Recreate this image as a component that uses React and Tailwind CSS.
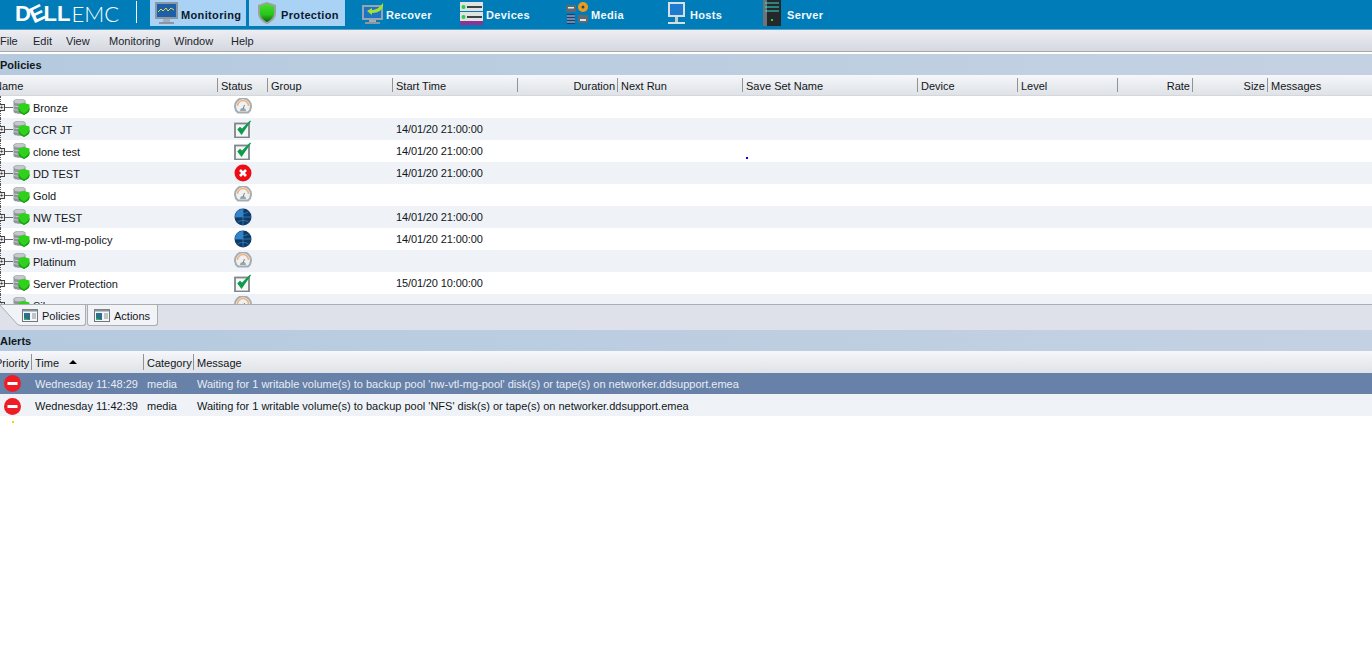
import React from 'react';

const policyColumns = [
  { label: 'Name', width: 'w-[217px]', className: '-indent-[10px]' },
  { label: 'Status', width: 'w-[50px]' },
  { label: 'Group', width: 'w-[125px]' },
  { label: 'Start Time', width: 'w-[125px]' },
  { label: 'Duration', width: 'w-[100px]', right: true },
  { label: 'Next Run', width: 'w-[125px]' },
  { label: 'Save Set Name', width: 'w-[175px]' },
  { label: 'Device', width: 'w-[100px]' },
  { label: 'Level', width: 'w-[100px]' },
  { label: 'Rate', width: 'w-[75px]', right: true },
  { label: 'Size', width: 'w-[75px]', right: true },
  { label: 'Messages', width: 'flex-1' },
];

const policies = [
  { name: 'Bronze', status: 'gauge' },
  { name: 'CCR JT', status: 'check', start: '14/01/20 21:00:00' },
  { name: 'clone test', status: 'check', start: '14/01/20 21:00:00' },
  { name: 'DD TEST', status: 'error', start: '14/01/20 21:00:00' },
  { name: 'Gold', status: 'gauge' },
  { name: 'NW TEST', status: 'globe', start: '14/01/20 21:00:00' },
  { name: 'nw-vtl-mg-policy', status: 'globe', start: '14/01/20 21:00:00' },
  { name: 'Platinum', status: 'gauge' },
  { name: 'Server Protection', status: 'check', start: '15/01/20 10:00:00' },
  { name: 'Silver', status: 'gauge' },
];

const alerts = [
  {
    time: 'Wednesday 11:48:29',
    message: "Waiting for 1 writable volume(s) to backup pool 'nw-vtl-mg-pool' disk(s) or tape(s) on networker.ddsupport.emea",
    selected: true,
  },
  {
    time: 'Wednesday 11:42:39',
    message: "Waiting for 1 writable volume(s) to backup pool 'NFS' disk(s) or tape(s) on networker.ddsupport.emea",
  },
];

function MonitorIcon() {
  return (
    <svg width="26" height="26" viewBox="0 0 26 26">
      <rect x="1" y="2" width="23" height="17" fill="#8b97a3" />
      <rect x="3" y="4" width="19" height="13" fill="#1d5fa8" />
      <path d="M4 12l3-3 2 2 3-3 2 3 3-3 3 2" fill="none" stroke="#e8d83a" strokeWidth="1" />
      <rect x="9" y="19" width="7" height="3" fill="#a4adb5" />
      <rect x="5" y="22" width="15" height="2" fill="#8b97a3" />
    </svg>
  );
}

function ShieldIcon() {
  return (
    <svg width="20" height="24" viewBox="0 0 20 24">
      <defs>
        <linearGradient id="shieldFill" x1="0" y1="0" x2="0" y2="1">
          <stop offset="0" stopColor="#45e02c" />
          <stop offset="0.6" stopColor="#26c41a" />
          <stop offset="1" stopColor="#0f5f10" />
        </linearGradient>
      </defs>
      <path d="M10 1l9 3v8c0 5-4 9-9 11-5-2-9-6-9-11V4z" fill="#9aa39a" />
      <path d="M10 3l7 2.500v6.500c0 4-3 7-7 9-4-2-7-5-7-9V5.500z" fill="url(#shieldFill)" />
    </svg>
  );
}

function RecoverIcon() {
  return (
    <svg width="28" height="26" viewBox="0 0 28 26">
      <rect x="1" y="5" width="21" height="15" fill="#97a3ad" />
      <rect x="3" y="7" width="17" height="11" fill="#1c74c9" />
      <path d="M6 11l5-3v2c4 0 7-2 11-7 1 5-3 10-11 10v2z" fill="#a5e02c" />
      <rect x="8" y="20" width="7" height="2" fill="#a4adb5" />
      <rect x="4" y="22" width="15" height="2" fill="#8b97a3" />
    </svg>
  );
}

function DevicesIcon() {
  return (
    <svg width="24" height="24" viewBox="0 0 24 24">
      <rect y="1" width="23" height="9" fill="#dfe4e2" />
      <rect y="11" width="23" height="9" fill="#dfe4e2" />
      <rect y="20" width="23" height="4" fill="#8e3393" />
      <rect x="7" y="5" width="15" height="2" fill="#3c4448" />
      <rect x="7" y="15" width="15" height="2" fill="#3c4448" />
      <circle cx="3.500" cy="6" r="2" fill="#25d33a" />
      <circle cx="3.500" cy="16" r="2" fill="#25d33a" />
    </svg>
  );
}

function MediaIcon() {
  return (
    <svg width="24" height="24" viewBox="0 0 24 24">
      <rect x="1" y="4" width="10" height="7" fill="#5d6a74" />
      <rect x="3" y="6" width="6" height="1.500" fill="#e5e8ea" />
      <circle cx="18" cy="6" r="5" fill="#f09a1a" />
      <circle cx="18" cy="6" r="1.500" fill="#18506f" />
      <rect x="2" y="13" width="8" height="10" fill="#1f3f72" />
      <path d="M2 15h8M2 18h8M2 21h8" stroke="#c4d0de" strokeWidth="1" />
      <rect x="13" y="14" width="10" height="8" fill="#5d6a74" />
      <rect x="15" y="18" width="6" height="2" fill="#dfe4e2" />
    </svg>
  );
}

function HostsIcon() {
  return (
    <svg width="20" height="26" viewBox="0 0 20 26">
      <rect x="1" y="2" width="17" height="15" fill="#d8dee3" />
      <rect x="3" y="4" width="13" height="11" fill="#1d7bd0" />
      <rect x="8" y="17" width="3" height="5" fill="#c3ccd3" />
      <rect x="1" y="22" width="17" height="2" fill="#d8dee3" />
    </svg>
  );
}

function ServerIcon() {
  return (
    <svg width="18" height="26" viewBox="0 0 18 26">
      <rect width="18" height="26" fill="#24282b" />
      <rect width="4" height="26" fill="#6d7478" />
      <path d="M2 3h14M2 7h14M2 11h14" stroke="#35e0d8" strokeWidth="1.200" />
      <rect x="8" y="19" width="2" height="2" fill="#25d33a" />
    </svg>
  );
}

function NavItem({ icon, label, active, className }) {
  return (
    <div className={`flex h-[26px] items-center font-bold text-[11px] ${active ? 'bg-[#a9d2f5] text-[#0b1a2c]' : 'text-[#f2f8fc]'} ${className}`}>
      {icon}
      <span className="tracking-[0.35px] mt-[4px]">{label}</span>
    </div>
  );
}

function Logo() {
  return (
    <div className="flex items-center w-[136px] pl-[15px] text-white h-[28px]">
      <span className="font-['Liberation_Sans',sans-serif] font-bold text-[22px] leading-none flex items-center">
        D<span className="inline-block -rotate-[25deg] mx-[-1px]">E</span>LL
      </span>
      <span className="font-['Lato',sans-serif] font-light text-[22px] leading-none ml-[1px]">EMC</span>
    </div>
  );
}

function StatusIcon({ type }) {
  if (type === 'check') {
    return (
      <svg width="18" height="18" viewBox="0 0 18 18">
        <rect x="1" y="3.500" width="14" height="14" fill="#f5f6f5" stroke="#7f8689" strokeWidth="1.800" />
        <path d="M4 9.500l3.500 4.500L16.500 1 8 9.500l-2-2z" fill="#0d9a4c" stroke="#0d9a4c" strokeWidth="1.200" />
      </svg>
    );
  }
  if (type === 'error') {
    return (
      <svg width="18" height="18" viewBox="0 0 18 18">
        <circle cx="9" cy="9" r="8.500" fill="#ee0d17" />
        <path d="M6 6l6 6M12 6l-6 6" stroke="#fff" strokeWidth="2.600" />
      </svg>
    );
  }
  if (type === 'globe') {
    return (
      <svg width="18" height="18" viewBox="0 0 18 18">
        <circle cx="9" cy="9" r="8.500" fill="#0d3c68" />
        <path d="M9 1a8 8 0 0 0-8 8h8z" fill="#2f86cf" />
        <path d="M9 1v16M1 9h16M3.500 4c3 2 8 2 11 0M3.500 14c3-2 8-2 11 0" fill="none" stroke="#3f7fb8" strokeWidth="0.800" />
      </svg>
    );
  }
  return (
    <svg width="18" height="16" viewBox="0 0 18 16" className="-mt-[2px]">
      <path d="M4 14.500a8 8 0 1 1 10 0z" fill="#eef0f1" stroke="#a3adb3" strokeWidth="2" />
      <path d="M3.500 8a5.500 5.500 0 0 1 11 0" fill="none" stroke="#efb27c" strokeWidth="1.500" />
      <path d="M6 13a3 3 0 0 1 6 0z" fill="#9aa5ab" />
      <path d="M9 11l1.500-4" stroke="#7b868c" strokeWidth="1" />
    </svg>
  );
}

function PolicyIcon() {
  return (
    <svg width="17" height="16" viewBox="0 0 17 16" className="shrink-0">
      <ellipse cx="6.500" cy="2.500" rx="6" ry="2.300" fill="#c5c9cc" stroke="#858b8f" strokeWidth="0.600" />
      <path d="M0.500 2.500v10c0 1.300 2.700 2.300 6 2.300s6-1 6-2.300v-10c0 1.300-2.700 2.300-6 2.300s-6-1-6-2.300z" fill="#8e9498" />
      <path d="M0.500 6.500c1 1.500 11 1.500 12 0M0.500 10c1 1.500 11 1.500 12 0" fill="none" stroke="#d7dadc" strokeWidth="0.800" />
      <path d="M11 4l5.500 1.500v5c0 2.500-2.500 4-5.500 5.500-3-1.500-5.500-3-5.500-5.500v-5z" fill="#2fd11c" />
      <path d="M11 16c3-1.500 5.500-3 5.500-5.500v-2c-1 3-3 5-5.500 6-2.500-1-4.500-3-5.500-6v2c0 2.500 2.500 4 5.500 5.500z" fill="#1f9a18" />
    </svg>
  );
}

function TreeHandle() {
  return (
    <div className="relative w-[13px] h-full shrink-0">
      <div className="absolute left-0 top-0 bottom-0 border-l border-dotted border-l-[#555]" />
      <div className="absolute left-0 top-[11px] w-[13px] border-t border-t-[#666]" />
      <div className="absolute left-[-2px] top-[8px] w-[7px] h-[7px] bg-[#eeeeee] border border-[#444] flex items-center justify-center text-[7px] leading-none text-black">
        +
      </div>
    </div>
  );
}

function SectionTitle({ children }) {
  return (
    <div className="h-[21px] shrink-0 flex items-center bg-gradient-to-r from-[#b5cadf] to-[#c4d1e3] text-[11px] font-bold text-[#101820]">
      <span className="mt-[2px]">{children}</span>
    </div>
  );
}

function HeaderCell({ label, width, right, className = '', first }) {
  return (
    <div className={`${width} h-full flex items-center shrink-0 relative ${right ? 'justify-end pr-[2px]' : 'pl-[4px]'} ${className}`}>
      {!first && <div className="absolute left-0 top-[3px] bottom-[3px] border-l border-l-[#8e9398]" />}
      <span className="whitespace-nowrap mt-[3px]">{label}</span>
    </div>
  );
}

function TabIcon() {
  return (
    <svg width="16" height="13" viewBox="0 0 16 13">
      <rect x="0.500" y="0.500" width="15" height="12" fill="#f5f6f7" stroke="#6f767b" />
      <rect x="0.500" y="0.500" width="15" height="2" fill="#8a9197" />
      <rect x="2" y="4" width="6" height="7" fill="#2a6f8e" />
      <path d="M2 9l6 2H2z" fill="#3cb04c" />
      <path d="M10 5h4M10 7h4M10 9h4" stroke="#8a9197" strokeWidth="1" />
    </svg>
  );
}

function PriorityIcon() {
  return (
    <svg width="17" height="17" viewBox="0 0 17 17">
      <circle cx="8.500" cy="8.500" r="8.500" fill="#ee1c25" />
      <rect x="3.500" y="7" width="10" height="3" fill="#fff" />
    </svg>
  );
}

export default function App() {
  return (
    <div className="relative w-[1372px] h-[648px] overflow-hidden bg-white text-[11px] text-[#12161a] font-['Liberation_Sans',Arial,sans-serif] flex flex-col">
      {/* top nav */}
      <div className="h-[30px] shrink-0 bg-[#007db8] border-b border-b-[#5f9fc4] flex items-start">
        <Logo />
        <div className="w-px h-[22px] bg-white mt-[1px] mr-[13px]" />
        <NavItem active icon={<span className="ml-[4px] mr-[1px]"><MonitorIcon /></span>} label="Monitoring" className="w-[96px]" />
        <div className="w-[3px]" />
        <NavItem active icon={<span className="ml-[8px] mr-[4px]"><ShieldIcon /></span>} label="Protection" className="w-[96px]" />
        <NavItem icon={<span className="ml-[16px] mr-[-3px]"><RecoverIcon /></span>} label="Recover" className="w-[115px]" />
        <NavItem icon={<span className="mr-[2px]"><DevicesIcon /></span>} label="Devices" className="w-[105px]" />
        <NavItem icon={<span className="mr-[2px]"><MediaIcon /></span>} label="Media" className="w-[102px]" />
        <NavItem icon={<span className="mr-[3px]"><HostsIcon /></span>} label="Hosts" className="w-[96px]" />
        <NavItem icon={<span className="mr-[6px]"><ServerIcon /></span>} label="Server" />
      </div>

      {/* menu bar */}
      <div className="h-[22px] shrink-0 bg-gradient-to-b from-[#eceef4] to-[#d6d8df] flex items-center text-[#20252a] border-b border-b-[#a8a9ab]">
        <span className="w-[33px] mt-[2px]">File</span>
        <span className="w-[33px] mt-[2px]">Edit</span>
        <span className="w-[43px] mt-[2px]">View</span>
        <span className="w-[65px] mt-[2px]">Monitoring</span>
        <span className="w-[57px] mt-[2px]">Window</span>
        <span className="mt-[2px]">Help</span>
      </div>
      <div className="h-[2px] shrink-0 bg-white" />

      {/* policies */}
      <SectionTitle>Policies</SectionTitle>
      <div className="h-[21px] shrink-0 flex bg-gradient-to-b from-[#f5f7fa] to-[#dfe2e6] border-b border-b-[#d5d7da]">
        {policyColumns.map((col, i) => (
          <HeaderCell key={col.label} first={i === 0} {...col} />
        ))}
      </div>
      <div className="h-[208px] shrink-0 overflow-hidden">
        {policies.map((row, i) => (
          <div key={row.name} className={`h-[22px] flex items-center ${i % 2 === 1 ? 'bg-[#eff3f7]' : 'bg-white'}`}>
            <TreeHandle />
            <PolicyIcon />
            <span className="w-[187px] shrink-0 pl-[3px] mt-[2px]">{row.name}</span>
            <div className="w-[50px] shrink-0 flex justify-center pl-[2px] -mt-[1px]">
              <StatusIcon type={row.status} />
            </div>
            <div className="w-[125px] shrink-0" />
            <span className="pl-[4px] tracking-[-0.12px]">{row.start}</span>
          </div>
        ))}
      </div>

      {/* tabs */}
      <div className="h-[26px] shrink-0 bg-[#dfe1ea] border-t border-t-[#a9aeb0] flex items-start">
        <svg width="20" height="21" viewBox="0 0 20 21" className="shrink-0">
          <path d="M0 0L18 20H20V0z" fill="#f2f3f7" />
          <path d="M0 0L18 20H20" fill="none" stroke="#a9aeb0" />
        </svg>
        <div className="w-[66px] h-[21px] bg-[#f2f3f7] border-b border-r border-[#a9aeb0] rounded-br-[3px] flex items-center gap-[4px] pl-[2px]">
          <TabIcon />
          <span className="mt-[2px]">Policies</span>
        </div>
        <div className="ml-[1px] w-[71px] h-[21px] bg-[#f2f3f7] border-b border-r border-l border-[#a9aeb0] rounded-b-[3px] flex items-center gap-[4px] pl-[6px]">
          <TabIcon />
          <span className="mt-[2px]">Actions</span>
        </div>
      </div>

      {/* alerts */}
      <SectionTitle>Alerts</SectionTitle>
      <div className="h-[22px] shrink-0 flex bg-gradient-to-b from-[#f5f7fa] to-[#dfe2e6]">
        <HeaderCell first label="Priority" width="w-[31px]" className="-indent-[9px]" />
        <div className="w-[112px] h-full flex items-center shrink-0 relative pl-[4px]">
          <div className="absolute left-0 top-[3px] bottom-[3px] border-l border-l-[#8e9398]" />
          <span className="mt-[3px]">Time</span>
          <span className="ml-[10px] w-0 h-0 border-x-[4px] border-x-transparent border-b-[4px] border-b-black" />
        </div>
        <HeaderCell label="Category" width="w-[50px]" />
        <HeaderCell label="Message" width="flex-1" />
      </div>
      {alerts.map((alert) => (
        <div
          key={alert.time}
          className={`shrink-0 flex items-center ${alert.selected ? 'h-[21px] bg-[#6881a8] text-[#e6edf6]' : 'h-[22px] bg-[#eff3f7] pt-[2px]'}`}
        >
          <div className="w-[31px] shrink-0 pl-[4px] flex">
            <PriorityIcon />
          </div>
          <span className="w-[112px] shrink-0 pl-[4px] mt-[1px]">{alert.time}</span>
          <span className="w-[50px] shrink-0 pl-[4px] mt-[1px]">media</span>
          <span className="pl-[4px] whitespace-nowrap mt-[1px]">{alert.message}</span>
        </div>
      ))}

      {/* stray pixels in the capture */}
      <div className="absolute left-[746px] top-[157px] w-[2px] h-[2px] bg-[#0000e0]" />
      <div className="absolute left-[12px] top-[421px] w-[2px] h-[2px] bg-[#f5d800]" />
    </div>
  );
}
